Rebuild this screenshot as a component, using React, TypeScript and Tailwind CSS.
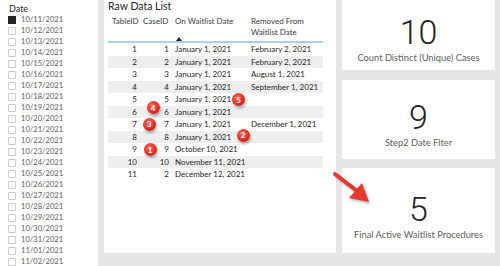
const dates = [
  "10/11/2021", "10/12/2021", "10/13/2021", "10/14/2021", "10/15/2021", "10/16/2021",
  "10/17/2021", "10/18/2021", "10/19/2021", "10/20/2021", "10/21/2021", "10/22/2021",
  "10/23/2021", "10/24/2021", "10/25/2021", "10/26/2021", "10/27/2021", "10/28/2021",
  "10/29/2021", "10/30/2021", "10/31/2021", "11/01/2021", "11/02/2021",
];

const rows = [
  [1, 1, "January 1, 2021", "February 2, 2021"],
  [2, 2, "January 1, 2021", "February 2, 2021"],
  [3, 3, "January 1, 2021", "August 1, 2021"],
  [4, 4, "January 1, 2021", "September 1, 2021"],
  [5, 5, "January 1, 2021", ""],
  [6, 6, "January 1, 2021", ""],
  [7, 7, "January 1, 2021", "December 1, 2021"],
  [8, 8, "January 1, 2021", ""],
  [9, 9, "October 10, 2021", ""],
  [10, 10, "November 11, 2021", ""],
  [11, 2, "December 12, 2021", ""],
] as const;

// badge centres, page coords
const badges = [
  { n: 5, x: 238.5, y: 99.5 },
  { n: 4, x: 153, y: 107.5 },
  { n: 3, x: 149, y: 124 },
  { n: 2, x: 243, y: 135 },
  { n: 1, x: 150, y: 149.5 },
];

const font = { fontFamily: 'Lato, "Open Sans", sans-serif' };

function Badge({ n, x, y }: { n: number; x: number; y: number }) {
  return (
    <div
      className="absolute flex h-[13px] w-[13px] items-center justify-center rounded-full bg-[radial-gradient(circle_at_40%_35%,#ff6b5e,#e1261c_60%,#c4160f)] text-[8px] font-bold leading-none text-white shadow-[1px_2px_3px_rgba(0,0,0,0.35)]"
      style={{ left: x - 6.5, top: y - 6.5 }}
    >
      {n}
    </div>
  );
}

function Card({
  value,
  label,
  className,
  pad,
}: {
  value: string;
  label: string;
  className: string;
  pad: string;
}) {
  return (
    <div className={`flex flex-col items-center bg-white ${className} ${pad}`}>
      <div
        className="text-[34px] font-light leading-none text-[#252423]"
        style={{ fontFamily: 'Roboto, "Liberation Sans", sans-serif' }}
      >
        {value}
      </div>
      <div className="mt-[3px] whitespace-nowrap text-[9.3px] leading-[12px] text-[#605e5c]">{label}</div>
    </div>
  );
}

export default function App() {
  return (
    <div className="relative flex h-[266px] w-[500px] overflow-hidden bg-[#e6e6e6]" style={font}>
      {/* date slicer */}
      <div className="h-full w-[98px] shrink-0 bg-white pt-[3px]">
        <div className="pl-[9px] text-[9px] leading-[11px] text-[#252423]">Date</div>
        {dates.map((d, i) => (
          <div key={d} className="flex h-[11px] items-center pl-[8px]">
            <div
              className={
                i === 0
                  ? "h-[8px] w-[8px] bg-[#252423]"
                  : "h-[8px] w-[8px] rounded-[1px] border border-[#cfcdcb] bg-white"
              }
            />
            <span className="ml-[5px] text-[7.6px] leading-none text-[#605e5c]">{d}</span>
          </div>
        ))}
      </div>

      {/* table */}
      <div className="ml-[6px] h-[253px] w-[232px] shrink-0 bg-white px-[4px]">
        <div className="h-[16px] text-[10.5px] leading-[13px] text-[#252423]">Raw Data List</div>
        <div className="flex h-[25px] whitespace-nowrap text-[8px] leading-[11px] text-[#3b3a39]">
          <div className="w-[32px] pl-[4px]">TableID</div>
          <div className="w-[32px] pl-[3px]">CaseID</div>
          <div className="relative w-[76px] pl-[3px]">
            On Waitlist Date
            <svg className="absolute left-[4px] top-[21px]" width="6" height="4" viewBox="0 0 6 4">
              <path d="M3 0 L6 4 L0 4 Z" fill="#252423" />
            </svg>
          </div>
          <div className="w-[75px] pl-[3px]">
            Removed From
            <br />
            Waitlist Date
          </div>
        </div>
        <div className="h-[2px] w-[215px] bg-[#a9d0f2]" />
        {rows.map((r, i) => (
          <div
            key={r[0]}
            className={`flex h-[12.5px] w-[215px] items-center whitespace-nowrap text-[8px] leading-none text-[#252423] ${
              i % 2 === 1 ? "bg-[#eeeeee]" : ""
            }`}
          >
            <div className="w-[32px] pr-[3px] text-right">{r[0]}</div>
            <div className="w-[32px] pr-[3px] text-right">{r[1]}</div>
            <div className="w-[76px] pl-[3px]">{r[2]}</div>
            <div className="w-[75px] pl-[3px]">{r[3]}</div>
          </div>
        ))}
      </div>

      {/* cards */}
      <div className="ml-[6px] flex w-[153px] shrink-0 flex-col">
        <Card value="10" label="Count Distinct (Unique) Cases" className="h-[70px]" pad="pt-[15px]" />
        <Card value="9" label="Step2 Date Flter" className="mt-[10px] h-[79px]" pad="pt-[20px]" />
        <Card value="5" label="Final Active Waitlist Procedures" className="mt-[9px] h-[85px]" pad="pt-[24px]" />
      </div>

      {badges.map((b) => (
        <Badge key={b.n} {...b} />
      ))}

      {/* red arrow */}
      <svg className="absolute left-[328px] top-[166px]" width="48" height="44" viewBox="0 0 48 44">
        <defs>
          <filter id="sh" x="-20%" y="-20%" width="150%" height="150%">
            <feDropShadow dx="1" dy="1.5" stdDeviation="1.2" floodColor="#000" floodOpacity="0.35" />
          </filter>
        </defs>
        <g filter="url(#sh)">
          <line x1="7" y1="8" x2="29" y2="25" stroke="#e8392f" strokeWidth="4" strokeLinecap="round" />
          <path d="M41 36 L21 32 L34 17 Z" fill="#e8392f" />
        </g>
      </svg>
    </div>
  );
}
